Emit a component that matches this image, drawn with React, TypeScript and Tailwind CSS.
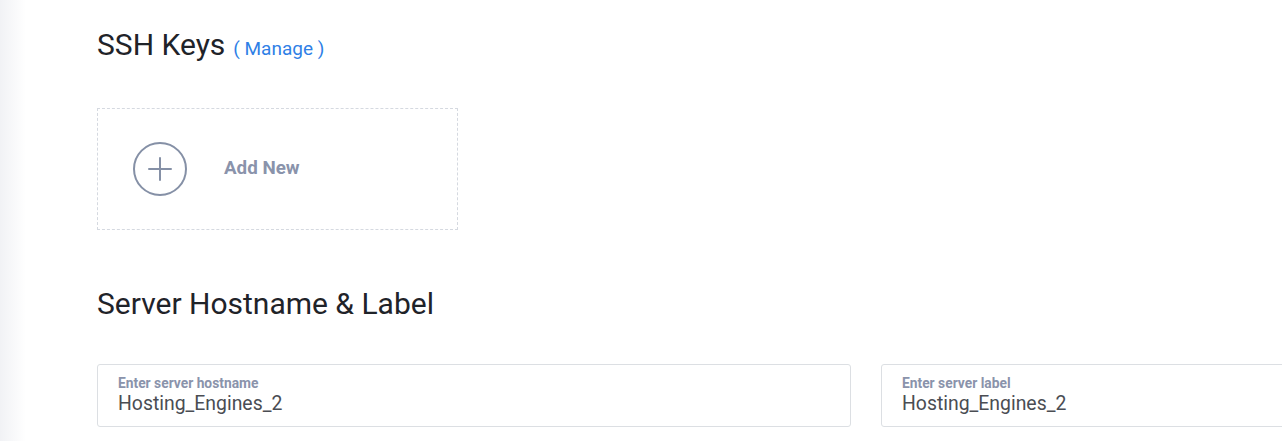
import { useState } from 'react';

function PlusCircle() {
  return (
    <svg width="56" height="56" viewBox="0 0 56 56" fill="none">
      <circle cx="28" cy="28" r="26" stroke="#8590a6" strokeWidth="2" />
      <path d="M17 28h22M28 17v22" stroke="#8590a6" strokeWidth="2" strokeLinecap="round" />
    </svg>
  );
}

function Field({ label, value }: { label: string; value: string }) {
  const [text, setText] = useState(value);
  return (
    <label className="flex h-[63px] flex-col justify-center rounded-[3px] border border-[#dcdfe3] bg-white px-5">
      <span className="text-[13.8px] font-bold leading-[16px] text-[#8a93ab]">{label}</span>
      <input
        className="w-full bg-transparent text-[19.4px] leading-[25px] text-[#4a4d53] outline-none"
        value={text}
        onChange={(e) => setText(e.target.value)}
      />
    </label>
  );
}

export default function App() {
  return (
    <div
      className="relative h-[441px] w-[1282px] overflow-hidden bg-white"
      style={{ fontFamily: 'Roboto, "Liberation Sans", sans-serif' }}
    >
      <div className="absolute inset-y-0 left-0 w-[26px] bg-gradient-to-r from-[#f1f2f5] to-white" />

      <div className="relative pl-[97px] pt-[27px]">
        <div className="flex items-baseline gap-2">
          <h2 className="text-[30px] leading-[36px] text-[#1f2329]">SSH Keys</h2>
          <a href="#" className="text-[19px] text-[#2f7fe6]">( Manage )</a>
        </div>

        <button className="mt-[44px] flex h-[122px] w-[361px] items-center border border-dashed border-[#d5d9e0] pl-[34px] text-left">
          <PlusCircle />
          <span className="ml-[36px] text-[18.8px] font-bold text-[#8a93ab]">Add New</span>
        </button>

        <h2 className="mt-[56px] text-[30px] leading-[36px] text-[#1f2329]">Server Hostname &amp; Label</h2>

        <div className="mt-[42px] flex gap-[30px]">
          <div className="w-[754px] shrink-0">
            <Field label="Enter server hostname" value="Hosting_Engines_2" />
          </div>
          <div className="w-[754px] shrink-0">
            <Field label="Enter server label" value="Hosting_Engines_2" />
          </div>
        </div>
      </div>
    </div>
  );
}
